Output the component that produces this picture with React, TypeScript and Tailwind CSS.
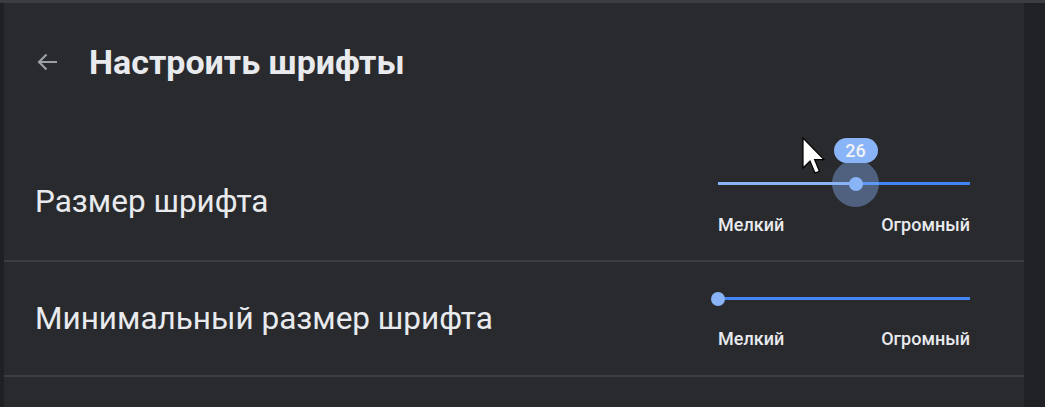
function Slider({ value, showBubble, gap }: { value: number; showBubble?: boolean; gap: string }) {
    // value: 0..1 position of the knob
    const pct = value * 100;
    return (
        <div className="w-[252px] flex flex-col">
            <div className="relative h-[14px]">
                <div className="absolute left-0 right-0 top-[6px] h-[3px] bg-[#4285f4]" />
                <div className="absolute left-0 top-[6px] h-[3px] bg-[#8ab4f8]" style={{ width: `${pct}%` }} />
                {showBubble && (
                    <div
                        className="absolute top-[-16px] w-[47px] h-[47px] -ml-[23.5px] rounded-full bg-[#8ab4f8] opacity-40"
                        style={{ left: `${pct}%` }}
                    />
                )}
                <div
                    className="absolute top-[0.5px] w-[14px] h-[14px] -ml-[7px] rounded-full bg-[#8ab4f8]"
                    style={{ left: `${pct}%` }}
                />
                {showBubble && (
                    <div
                        className="absolute top-[-38px] h-[25px] w-[44px] -ml-[22px] rounded-full bg-[#8ab4f8] text-[#f1f3f4] text-[18px] font-medium flex items-center justify-center"
                        style={{ left: `${pct}%` }}
                    >
                        26
                    </div>
                )}
            </div>
            <div className={`flex justify-between ${gap} text-[18px] font-medium text-[#e8eaed] leading-none`}>
                <span>Мелкий</span>
                <span>Огромный</span>
            </div>
        </div>
    );
}

export default function App() {
    return (
        <main className="w-[1045px] h-[407px] bg-[#202124] overflow-hidden font-['Roboto',sans-serif]">
            <div className="h-[3px] bg-[#3c3d41]" />
            <div className="flex h-[404px]">
                <div className="w-[4px] bg-[#1f2023]" />
                <div className="w-[1020px] bg-[#292a2d] relative">
                    <div className="h-[141px] flex items-start pt-[39px] pl-[32px]">
                        <svg width="22" height="20" viewBox="0 0 22 20" className="mt-[10px] text-[#9aa0a6]">
                            <path d="M21 10 H3 M10.5 2.5 L3 10 L10.5 17.5" fill="none" stroke="currentColor" strokeWidth="2.2" />
                        </svg>
                        <h1 className="ml-[31px] text-[34px] font-bold text-[#e8eaed] leading-[40px]">Настроить шрифты</h1>
                    </div>
                    <div className="h-[118px] flex items-start justify-between border-b-[2px] border-[#3c3d40] pl-[31px] pr-[54px]">
                        <span className="text-[31.5px] text-[#e8eaed] self-center">Размер шрифта</span>
                        <div className="pt-[32px]">
                            <Slider value={0.546} showBubble gap="mt-[26px]" />
                        </div>
                    </div>
                    <div className="h-[115px] flex items-start justify-between border-b-[2px] border-[#3c3d40] pl-[31px] pr-[54px]">
                        <span className="text-[31.5px] text-[#e8eaed] self-center">Минимальный размер шрифта</span>
                        <div className="pt-[29px]">
                            <Slider value={0} gap="mt-[25px]" />
                        </div>
                    </div>
                    <svg className="absolute left-[797px] top-[133px]" width="26" height="40" viewBox="0 0 13 20">
                        <path d="M1 1 L1 16 L4.5 12.5 L7 18.5 L9.2 17.6 L6.8 11.8 L11.5 11.8 Z" fill="#fff" stroke="#000" strokeWidth="0.6" strokeLinejoin="miter" />
                    </svg>
                </div>
                <div className="flex-1 bg-[#202124]" />
            </div>
        </main>
    );
}
